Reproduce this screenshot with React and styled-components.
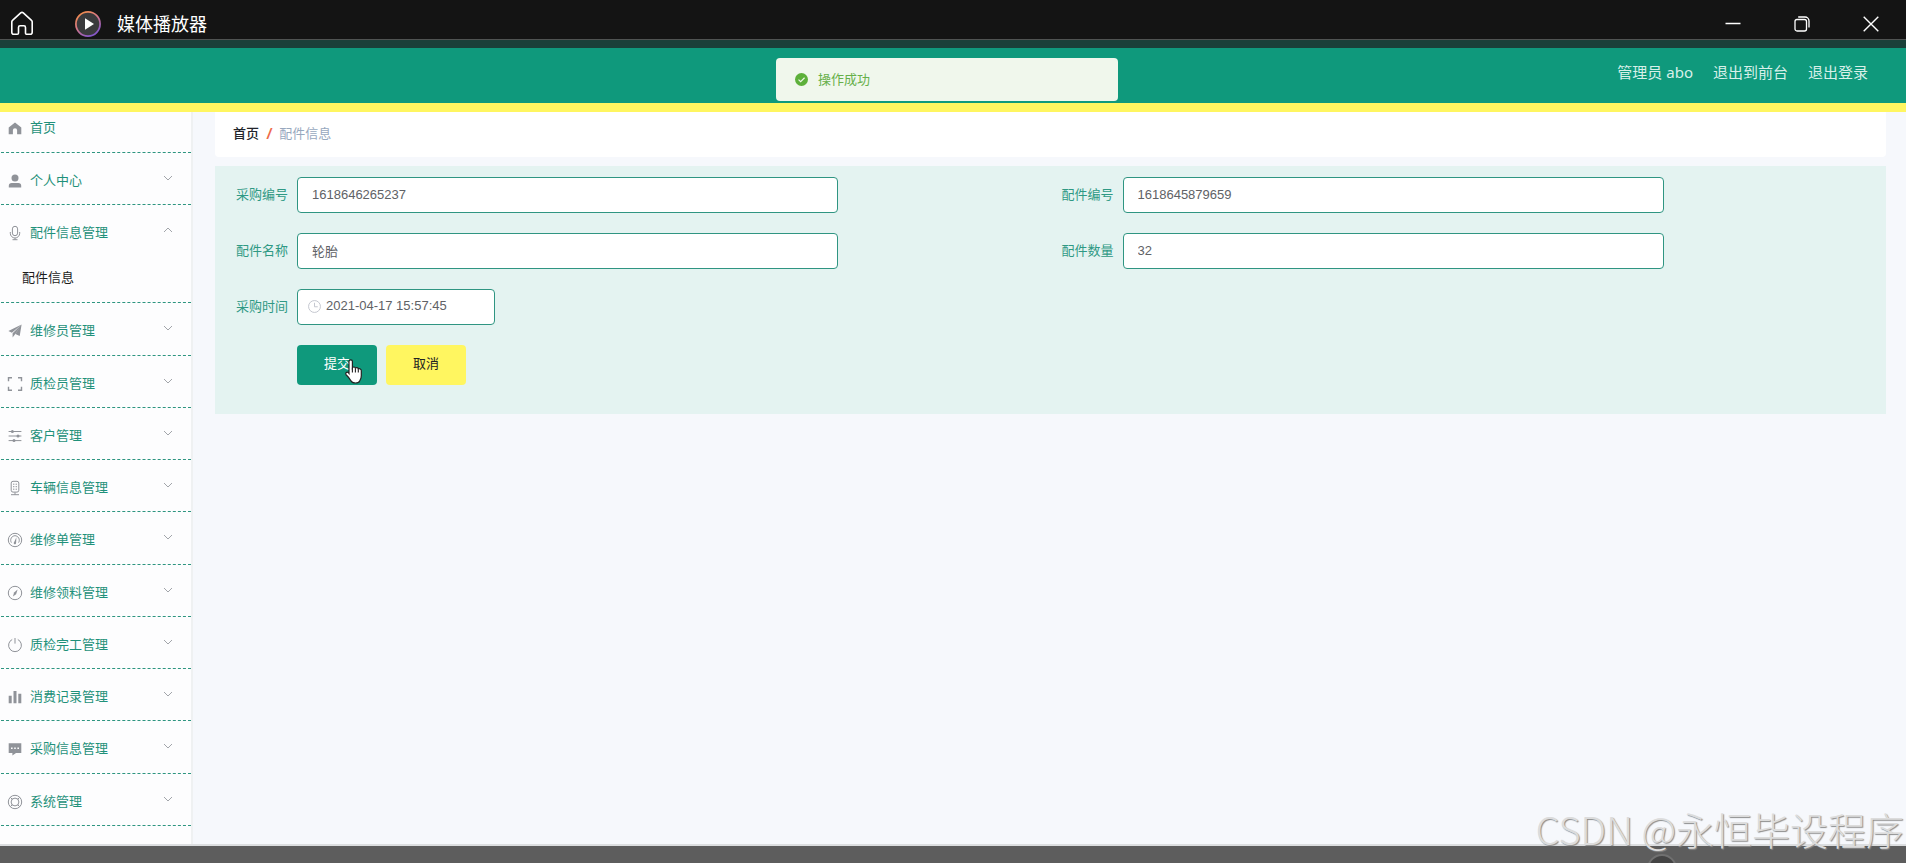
import React, { useState } from 'react'
import styled, { createGlobalStyle } from 'styled-components'

const menus = [
    { name: '个人中心', icon: 'user' },
    { name: '配件信息管理', icon: 'mic', children: ['配件信息'] },
    { name: '维修员管理', icon: 'promotion' },
    { name: '质检员管理', icon: 'fullscreen' },
    { name: '客户管理', icon: 'operation' },
    { name: '车辆信息管理', icon: 'microphone' },
    { name: '维修单管理', icon: 'odometer' },
    { name: '维修领料管理', icon: 'discover' },
    { name: '质检完工管理', icon: 'power' },
    { name: '消费记录管理', icon: 'chart' },
    { name: '采购信息管理', icon: 'comment' },
    { name: '系统管理', icon: 'help' },
]

const solid = { fill: 'currentColor', stroke: 'none' }

const shapes = {
    home: <path {...solid} d="M8 2.400 1.700 7.600V14.200H5.900V10.300a2.100 2.100 0 0 1 4.200 0v3.900h4.200V7.600z"/>,
    user: <g {...solid}><circle cx="8" cy="5" r="3.500"/><path d="M1.800 14.600v-1.900c0-1.700 1.100-2.700 2.800-2.700h6.800c1.700 0 2.800 1 2.800 2.700v1.900z"/></g>,
    mic: <g><rect x="5.400" y="1.300" width="5.200" height="9.400" rx="2.600"/><path d="M3.300 7v1.300a4.700 4.700 0 0 0 9.400 0V7M8 13v1.700M5.500 14.700h5"/></g>,
    promotion: <path {...solid} d="M14.600 1.400 1.400 8.100l3.500 1.600zM14.600 1.400 5.600 10.200v4.400l2.300-3.200zM14.600 1.400 8.400 10.900l4.300 2z"/>,
    fullscreen: <path strokeWidth="1.400" d="M1.500 5.300V1.800H5M11 1.800h3.500v3.500M14.500 10.700v3.500H11M5 14.200H1.500v-3.500"/>,
    operation: <g><path d="M1.600 3.500h12.800M1.600 8h12.800M1.600 12.600h12.800"/><g {...solid}><circle cx="5.400" cy="3.500" r="1.500"/><circle cx="11" cy="8" r="1.500"/><circle cx="7" cy="12.600" r="1.500"/></g></g>,
    microphone: <g><rect x="4.200" y="1.300" width="7.600" height="10.800" rx="1.800"/><path d="M6 4.200h1.400M8.600 4.200H10M6 6.700h1.400M8.600 6.700H10M6 9.200h1.400M8.600 9.200H10M8 12.400v2.300M4 14.700h8"/></g>,
    odometer: <g><circle cx="8" cy="8" r="6.700"/><path d="M4.400 10.600A4.500 4.500 0 0 1 8 3.700a4.500 4.500 0 0 1 3.600 6.900"/><path {...solid} d="m9.400 5.200-.3 5.600a1.200 1.200 0 1 1-1.900-.7z"/></g>,
    discover: <g><circle cx="8" cy="8" r="6.700"/><path {...solid} d="m10.600 4.400-1.500 4.800-3.200 2.400 1.200-4.200z"/></g>,
    power: <path d="M5.200 2.500a6.400 6.400 0 1 0 5.600 0M8 1v5.600"/>,
    chart: <path {...solid} d="M1.700 6.800h3V14.200h-3zM6.500 1.900h3V14.200h-3zM11.300 4.700h3V14.200h-3z"/>,
    comment: <path {...solid} fillRule="evenodd" d="M1.700 2.300h12.600v9.800H9l-3.600 2.500v-2.500H1.700zM4 6.400v1.600h1.600V6.400zm3.200 0v1.600h1.600V6.400zm3.200 0v1.600H12V6.400z"/>,
    help: <g><circle cx="8" cy="8" r="6.700"/><circle cx="8" cy="8" r="3.900"/><path d="m3.400 3.400 1.900 1.900M12.600 3.400l-1.900 1.900M3.400 12.600l1.900-1.900M12.600 12.600l-1.900-1.900"/></g>,
}

function MenuIcon({ name }) {
    return (
        <Icon viewBox="0 0 16 16" aria-hidden="true">{shapes[name]}</Icon>
    )
}

function Field({ id, label, value }) {
    const [text, setText] = useState(value)
    return (
        <FormItem>
            <Label htmlFor={id}>{label}</Label>
            <Input id={id} value={text} onChange={(e) => setText(e.target.value)}/>
        </FormItem>
    )
}

function TitleBar() {
    return (
        <Title>
            <TitleButton aria-label="主页">
                <svg width="24" height="26" viewBox="0 0 24 26" fill="none" stroke="#fff" strokeWidth="1.600" strokeLinejoin="round">
                    <path d="M1.800 10.800a2 2 0 0 1 .7-1.500L10.700 1.900a2 2 0 0 1 2.600 0l8.200 7.400a2 2 0 0 1 .7 1.500v10.400a2 2 0 0 1-2 2h-3.400a1.300 1.300 0 0 1-1.300-1.300v-5.500a1.600 1.600 0 0 0-1.600-1.600h-3.800a1.600 1.600 0 0 0-1.600 1.600v5.500a1.300 1.300 0 0 1-1.300 1.300H3.800a2 2 0 0 1-2-2z"/>
                </svg>
            </TitleButton>
            <Logo viewBox="0 0 26 26" aria-hidden="true">
                <defs>
                    <linearGradient id="ring" x1="0" y1="0" x2=".6" y2="1">
                        <stop offset="0" stopColor="#f7903d"/>
                        <stop offset=".5" stopColor="#d97a86"/>
                        <stop offset="1" stopColor="#8657c8"/>
                    </linearGradient>
                </defs>
                <circle cx="13" cy="13" r="12.100" fill="#3a3a3c" stroke="url(#ring)" strokeWidth="1.700"/>
                <path d="M10 7.200v11.600L19 13z" fill="#fff"/>
            </Logo>
            <AppName>媒体播放器</AppName>
            <WindowControls>
                <TitleButton aria-label="最小化">
                    <svg width="16" height="16" viewBox="0 0 16 16"><path d="M.5 7.500h15" stroke="#fff" strokeWidth="1.500"/></svg>
                </TitleButton>
                <TitleButton aria-label="还原">
                    <svg width="16" height="16" viewBox="0 0 16 16" fill="none" stroke="#fff" strokeWidth="1.300">
                        <rect x="1" y="3.500" width="11.500" height="11.500" rx="2"/>
                        <path d="M4.200 1H11a4 4 0 0 1 4 4v6.500"/>
                    </svg>
                </TitleButton>
                <TitleButton aria-label="关闭">
                    <svg width="16" height="16" viewBox="0 0 16 16" stroke="#fff" strokeWidth="1.400"><path d="m.7.700 14.600 14.600M15.300.700.700 15.300"/></svg>
                </TitleButton>
            </WindowControls>
        </Title>
    )
}

function Sidebar() {
    const [opened, setOpened] = useState('配件信息管理')
    return (
        <Aside>
            <MenuList>
                <MenuItem $first>
                    <MenuLink href="#/"><MenuIcon name="home"/><span>首页</span></MenuLink>
                </MenuItem>
                {
                    menus.map((menu) => {
                        const open = menu.name === opened
                        return (
                            <MenuItem key={menu.name} $open={open && menu.children}>
                                <MenuButton aria-expanded={open} onClick={() => setOpened(open ? '' : menu.name)}>
                                    <MenuIcon name={menu.icon}/>
                                    <span>{menu.name}</span>
                                    <Chevron viewBox="0 0 12 12" $open={open} aria-hidden="true">
                                        <path d="m2 4 4 4 4-4"/>
                                    </Chevron>
                                </MenuButton>
                                {open && menu.children && menu.children.map((name) =>
                                    <SubLink key={name} href="#/parts">{name}</SubLink>
                                )}
                            </MenuItem>
                        )
                    })
                }
            </MenuList>
        </Aside>
    )
}

export default function App() {
    const [time, setTime] = useState('2021-04-17 15:57:45')

    return (
        <Screen>
            <GlobalStyle/>
            <TitleBar/>
            <Banner>
                <Toast role="status">
                    <svg width="13" height="13" viewBox="0 0 14 14" aria-hidden="true">
                        <circle cx="7" cy="7" r="7" fill="#5db03a"/>
                        <path d="m3.800 7.200 2.300 2.200 4.200-4.300" fill="none" stroke="#f0f7ec" strokeWidth="1.200"/>
                    </svg>
                    操作成功
                </Toast>
                <UserNav>
                    <span>管理员 abo</span>
                    <a href="#/front">退出到前台</a>
                    <a href="#/login">退出登录</a>
                </UserNav>
            </Banner>
            <Body>
                <Sidebar/>
                <Main>
                    <Breadcrumb aria-label="breadcrumb">
                        <a href="#/">首页</a>
                        <i>/</i>
                        <span>配件信息</span>
                    </Breadcrumb>
                    <Form onSubmit={(e) => e.preventDefault()}>
                        <Field id="orderNo" label="采购编号" value="1618646265237"/>
                        <Field id="partNo" label="配件编号" value="1618645879659"/>
                        <Field id="partName" label="配件名称" value="轮胎"/>
                        <Field id="partCount" label="配件数量" value="32"/>
                        <FormItem $wide>
                            <Label htmlFor="orderTime">采购时间</Label>
                            <DateBox>
                                <svg width="13" height="13" viewBox="0 0 14 14" fill="none" stroke="#c0c4cc" aria-hidden="true">
                                    <circle cx="7" cy="7" r="6.400"/>
                                    <path d="M7 3v4.300h3.500"/>
                                </svg>
                                <input id="orderTime" value={time} onChange={(e) => setTime(e.target.value)}/>
                            </DateBox>
                        </FormItem>
                        <Actions>
                            <Button type="submit">
                                提交
                                <Hand viewBox="0 0 19 25" aria-hidden="true">
                                    <path d="M5 14.500V2.600a1.700 1.700 0 0 1 3.400 0v6.200c.7-1.200 2.700-1 3 .3.900-.9 2.700-.5 2.900.8 1.300-.7 3 .2 3 1.800v5c0 3.300-1.300 4.300-1.800 5.600-.4 1.100-1.700 1.700-4 1.700-2.600 0-4-.8-4.800-2.500-.7-1.500-2.500-3.800-4.600-5.800-1.200-1.300.5-3.200 2.100-2.200z" fill="#fff" stroke="#222" strokeWidth="1.200"/>
                                    <path d="M8.400 8.800v4.600M11.400 9.400v4M14.300 10.200v3.400" stroke="#222" strokeWidth="1.100"/>
                                </Hand>
                            </Button>
                            <Button type="button" $plain>取消</Button>
                        </Actions>
                    </Form>
                </Main>
            </Body>
            <PlayerBar>
                <Knob/>
            </PlayerBar>
            <Watermark>CSDN @永恒毕设程序</Watermark>
        </Screen>
    )
}

const GlobalStyle = createGlobalStyle`
    *{
        box-sizing: border-box;
    }
    body{
        margin: 0;
        font-family: "Liberation Sans", "Noto Sans CJK SC", sans-serif;
        font-size: 13px;
        line-height: 20px;
        color: #606266;
    }
    a{
        color: inherit;
        text-decoration: none;
    }
    button, input{
        font: inherit;
        color: inherit;
    }
    button{
        border: 0;
        padding: 0;
        background: none;
        cursor: pointer;
    }
`

const Screen = styled.div`
    position: relative;
    display: flex;
    flex-direction: column;
    min-height: 100vh;
    overflow: hidden;
    background: #f6f8fc;
`

const Title = styled.header`
    display: flex;
    align-items: center;
    height: 40px;
    padding: 8px 27px 0 10px;
    background: #141414;
    border-bottom: 1px solid #505352;
`

const TitleButton = styled.button`
    display: flex;
`

const Logo = styled.svg`
    width: 26px;
    height: 26px;
    margin: 0 16px 0 41px;
`

const AppName = styled.span`
    padding-top: 2px;
    font-size: 18px;
    color: #fff;
`

const WindowControls = styled.div`
    display: flex;
    gap: 53px;
    margin-left: auto;
`

const Banner = styled.div`
    position: relative;
    display: flex;
    justify-content: flex-end;
    height: 72px;
    padding: 14px 38px 0;
    background: #0f997c;
    border-top: 8px solid #1a4039;
    border-bottom: 9px solid #fff660;
`

const Toast = styled.div`
    position: absolute;
    top: 10px;
    left: calc(50% - 177px);
    display: flex;
    align-items: center;
    gap: 10px;
    width: 342px;
    height: 43px;
    padding: 0 19px;
    border-radius: 4px;
    background: #f0f7ec;
    color: #67b04a;
`

const UserNav = styled.nav`
    display: flex;
    gap: 20px;
    font-family: "Noto Sans", "Noto Sans CJK SC", sans-serif;
    font-size: 15px;
    color: #d8f0ea;
`

const Body = styled.div`
    display: flex;
    flex: 1;
`

const Aside = styled.aside`
    display: flex;
    flex: 0 0 193px;
    padding: 0 0 18px 1px;
    background: #fdfdfe;
    border-right: 2px solid #eff1f2;
`

const MenuList = styled.ul`
    display: flex;
    flex-direction: column;
    flex: 1;
    margin: 0;
    padding: 0;
    list-style: none;
`

const MenuItem = styled.li`
    flex: ${(p) => (p.$first || p.$open ? 'none' : '1 0 52px')};
    height: ${(p) => (p.$first ? '41px' : p.$open ? '98px' : 'auto')};
    padding: ${(p) => (p.$first ? '6px' : '18px')} 17px 0 6px;
    border-bottom: 1px dashed #2d9580;
`

const MenuLink = styled.a`
    display: flex;
    align-items: center;
    gap: 7px;
    color: #1f917a;
`

const MenuButton = styled.button`
    display: flex;
    align-items: center;
    gap: 7px;
    width: 100%;
    text-align: left;
    color: #1f917a;
`

const Icon = styled.svg`
    width: 16px;
    height: 16px;
    fill: none;
    stroke: currentColor;
    color: #909399;
`

const Chevron = styled.svg`
    width: 12px;
    height: 12px;
    margin: 0 0 6px auto;
    fill: none;
    stroke: #a2a5aa;
    transform: ${(p) => (p.$open ? 'rotate(180deg)' : 'none')};
`

const SubLink = styled.a`
    display: block;
    padding: 25px 0 0 15px;
    color: #1c1c1c;
`

const Main = styled.main`
    flex: 1;
    min-width: 0;
    padding: 0 20px 0 22px;
`

const Breadcrumb = styled.nav`
    display: flex;
    align-items: center;
    gap: 8px;
    height: 45px;
    padding: 0 18px 2px;
    border-radius: 0 0 4px 4px;
    background: #fff;
    color: #97a8be;
    a{
        color: #22252b;
        font-weight: 500;
    }
    i{
        font-size: 15px;
        font-weight: 700;
        color: #ee6a4a;
    }
`

const Form = styled.form`
    display: grid;
    grid-template-columns: 1fr 1fr;
    row-gap: 20px;
    margin-top: 9px;
    padding: 11px 9px 29px 11px;
    background: #e4f3f1;
`

const FormItem = styled.div`
    display: grid;
    grid-template-columns: 71px minmax(0, 541px);
    align-items: center;
    grid-column: ${(p) => (p.$wide ? '1 / -1' : 'auto')};
`

const Label = styled.label`
    padding-right: 9px;
    text-align: right;
    color: #2f9984;
`

const Input = styled.input`
    width: 100%;
    height: 36px;
    padding: 0 14px 2px;
    border: 1px solid #2f9582;
    border-radius: 4px;
    background: #fff;
    outline: none;
`

const DateBox = styled.div`
    display: flex;
    align-items: center;
    gap: 5px;
    width: 198px;
    height: 36px;
    padding: 0 10px 2px;
    border: 1px solid #2f9582;
    border-radius: 4px;
    background: #fff;
    input{
        flex: 1;
        min-width: 0;
        padding: 0;
        border: 0;
        outline: none;
        background: none;
    }
`

const Actions = styled.div`
    display: flex;
    gap: 9px;
    grid-column: 1 / -1;
    padding-left: 71px;
`

const Button = styled.button`
    position: relative;
    width: 80px;
    height: 40px;
    padding-bottom: 2px;
    border-radius: 4px;
    background: ${(p) => (p.$plain ? '#fff660' : '#0f997c')};
    color: ${(p) => (p.$plain ? '#222' : '#fff')};
`

const Hand = styled.svg`
    position: absolute;
    top: 14px;
    left: 47px;
    width: 19px;
    height: 25px;
    fill: none;
`

const PlayerBar = styled.footer`
    position: relative;
    height: 19px;
    overflow: hidden;
    background: #5d5d5d;
    border-top: 2px solid #dcdee0;
`

const Knob = styled.div`
    position: absolute;
    top: 8px;
    right: 229px;
    width: 30px;
    height: 30px;
    border: 2px solid #707070;
    border-radius: 50%;
    background: #444;
`

const Watermark = styled.div`
    position: absolute;
    right: 2px;
    bottom: 10px;
    font-family: "Noto Sans CJK SC", sans-serif;
    font-size: 38px;
    font-weight: 300;
    line-height: 48px;
    color: #dcdcdc;
    text-shadow: 1px 1px 1px #8c8c8c;
    white-space: nowrap;
    pointer-events: none;
`
